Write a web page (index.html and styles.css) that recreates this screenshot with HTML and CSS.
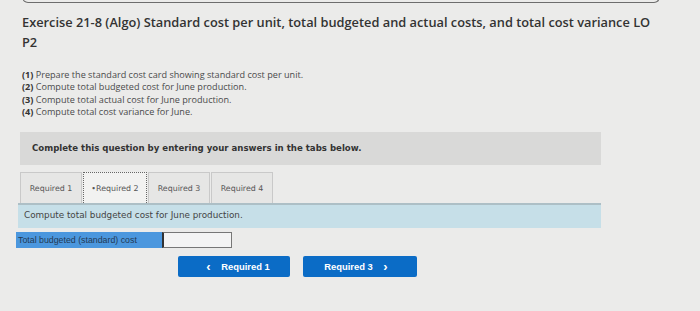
FILE: index.html
```html
<!DOCTYPE html>
<html lang="en">
<head>
    <meta charset="UTF-8">
    <title>Exercise 21-8 (Algo)</title>
    <link rel="stylesheet" href="styles.css">
</head>
<body>
    <div class="prev-card"></div>

    <main class="page">
        <h1 class="title">Exercise 21-8 (Algo) Standard cost per unit, total budgeted and actual costs, and total cost variance LO P2</h1>

        <ol class="tasks">
            <li><b>(1)</b> Prepare the standard cost card showing standard cost per unit.</li>
            <li><b>(2)</b> Compute total budgeted cost for June production.</li>
            <li><b>(3)</b> Compute total actual cost for June production.</li>
            <li><b>(4)</b> Compute total cost variance for June.</li>
        </ol>

        <div class="notice">Complete this question by entering your answers in the tabs below.</div>

        <div class="tabs">
            <div class="tab">Required 1</div>
            <div class="tab active">&#8226;Required 2</div>
            <div class="tab">Required 3</div>
            <div class="tab">Required 4</div>
        </div>

        <div class="instruction">Compute total budgeted cost for June production.</div>

        <div class="answer-row">
            <label class="answer-label" for="budgeted">Total budgeted (standard) cost</label>
            <input class="answer-input" type="text" id="budgeted">
        </div>

        <div class="nav-buttons">
            <button class="nav-btn"><span class="chev">&lsaquo;</span> Required 1</button>
            <button class="nav-btn">Required 3 <span class="chev">&rsaquo;</span></button>
        </div>
    </main>
</body>
</html>
```

FILE: styles.css
```css
* {
    margin: 0;
    padding: 0;
    box-sizing: border-box;
}

body {
    background-color: #ebebea;
    font-family: "Open Sans", Arial, sans-serif;
    color: #333;
    width: 700px;
    height: 311px;
    overflow: hidden;
}

.prev-card {
    margin: -18px 40px 0 22px;
    height: 21px;
    border: 1.5px solid #6d6d6d;
    border-top: none;
    border-radius: 0 0 6px 6px;
}

.page {
    padding: 0 0 0 20px;
}

.title {
    max-width: 632px;
    font-size: 12.8px;
    font-weight: 600;
    line-height: 20px;
    margin: 9px 0 0 2px;
    color: #333;
}

.tasks {
    list-style: none;
    margin: 17px 0 0 2px;
    font-size: 9.1px;
    line-height: 12.3px;
    color: #4a4a4a;
}

.tasks b {
    font-weight: 700;
    color: #333;
}

.notice {
    margin-top: 14px;
    width: 581px;
    height: 33px;
    background-color: #d9d9d8;
    font-family: "DejaVu Sans", Verdana, sans-serif;
    font-weight: bold;
    font-size: 8.6px;
    color: #333;
    padding: 11px 0 0 12px;
}

.tabs {
    display: flex;
    margin-top: 7px;
    height: 31px;
}

.tab {
    width: 62px;
    border: 1px solid #c9c9c9;
    border-bottom: none;
    background-color: #e6e6e5;
    font-family: "DejaVu Sans", Verdana, sans-serif;
    font-size: 7.9px;
    color: #555;
    text-align: center;
    padding-top: 11px;
    margin-right: 1px;
}

.tab.active {
    width: 64px;
    background-color: #f2f2f1;
    border: 1px dotted #666;
    border-bottom: none;
    color: #555;
}

.instruction {
    width: 583px;
    margin-left: -2px;
    height: 25px;
    background-color: #c6dfe8;
    border-top: 2px solid #adbfc6;
    font-family: "DejaVu Sans", Verdana, sans-serif;
    font-size: 8.8px;
    color: #444;
    padding: 5px 0 0 6px;
}

.answer-row {
    display: flex;
    margin: 4px 0 0 -4px;
    height: 16px;
}

.answer-label {
    width: 146px;
    background-color: #4b97de;
    font-family: "Liberation Sans", Arial, sans-serif;
    font-size: 8.8px;
    color: #233a55;
    padding: 3px 0 0 2px;
}

.answer-input {
    width: 70px;
    height: 16px;
    border: 1px solid #777;
    border-left: 2px solid #333;
    background-color: #f4f4f4;
}

.nav-buttons {
    display: flex;
    gap: 13px;
    margin: 8px 0 0 158px;
}

.nav-btn {
    width: 112px;
    height: 21px;
    background-color: #0b6cc6;
    border: none;
    border-radius: 2px;
    color: #fff;
    font-family: "Liberation Sans", Arial, sans-serif;
    font-weight: bold;
    font-size: 9.4px;
    cursor: pointer;
}

.nav-btn:last-child {
    width: 114px;
}

.chev {
    font-size: 13px;
    margin: 0 8px;
    vertical-align: -1px;
}
```
